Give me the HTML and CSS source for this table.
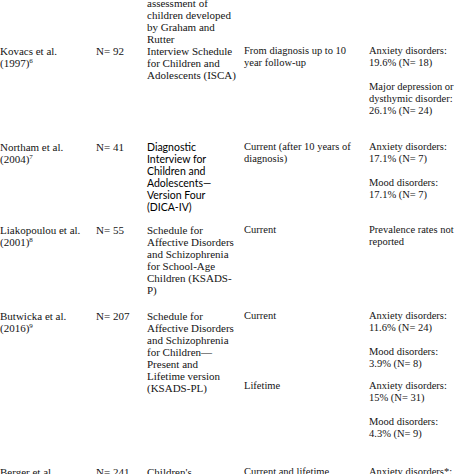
FILE: index.html
```html
<!DOCTYPE html>
<html lang="en">
<head>
<meta charset="utf-8">
<title>Studies table</title>
<link rel="stylesheet" href="styles.css">
</head>
<body>
<table class="studies">
  <colgroup>
    <col class="c-study">
    <col class="c-n">
    <col class="c-tool">
    <col class="c-time">
    <col class="c-rate">
  </colgroup>
  <tbody>
    <tr class="r0">
      <td></td>
      <td></td>
      <td>assessment of<br>children developed<br>by Graham and<br>Rutter</td>
      <td></td>
      <td></td>
    </tr>
    <tr class="r1">
      <td>Kovacs et al.<br>(1997)<sup class="ref">6</sup></td>
      <td>N= 92</td>
      <td>Interview Schedule<br>for Children and<br>Adolescents (ISCA)</td>
      <td class="time">From diagnosis up to 10<br>year follow-up</td>
      <td class="rate">
        <p class="para">Anxiety disorders:<br>19.6% (N= 18)</p>
        <p class="para">Major depression or<br>dysthymic disorder:<br>26.1% (N= 24)</p>
      </td>
    </tr>
    <tr class="r2">
      <td>Northam et al.<br>(2004)<sup class="ref">7</sup></td>
      <td>N= 41</td>
      <td class="sans">Diagnostic<br>Interview for<br>Children and<br>Adolescents—<br>Version Four<br>(DICA-IV)</td>
      <td class="time">Current (after 10 years of<br>diagnosis)</td>
      <td class="rate">
        <p class="para">Anxiety disorders:<br>17.1% (N= 7)</p>
        <p class="para">Mood disorders:<br>17.1% (N= 7)</p>
      </td>
    </tr>
    <tr class="r3">
      <td>Liakopoulou et al.<br>(2001)<sup class="ref">8</sup></td>
      <td>N= 55</td>
      <td>Schedule for<br>Affective Disorders<br>and Schizophrenia<br>for School-Age<br>Children (KSADS-<br>P)</td>
      <td class="time">Current</td>
      <td class="rate"><p class="para">Prevalence rates not<br>reported</p></td>
    </tr>
    <tr class="r4a">
      <td rowspan="2">Butwicka et al.<br>(2016)<sup class="ref">9</sup></td>
      <td rowspan="2">N= 207</td>
      <td rowspan="2">Schedule for<br>Affective Disorders<br>and Schizophrenia<br>for Children—<br>Present and<br>Lifetime version<br>(KSADS-PL)</td>
      <td class="time">Current</td>
      <td class="rate">
        <p class="para">Anxiety disorders:<br>11.6% (N= 24)</p>
        <p class="para">Mood disorders:<br>3.9% (N= 8)</p>
      </td>
    </tr>
    <tr class="r4b">
      <td class="time">Lifetime</td>
      <td class="rate">
        <p class="para">Anxiety disorders:<br>15% (N= 31)</p>
        <p class="para">Mood disorders:<br>4.3% (N= 9)</p>
      </td>
    </tr>
    <tr class="r5">
      <td>Berger et al</td>
      <td>N= 241</td>
      <td>Children's</td>
      <td class="time">Current and lifetime</td>
      <td class="rate"><p class="para">Anxiety disorders*:</p></td>
    </tr>
  </tbody>
</table>
</body>
</html>
```
FILE: styles.css
```css
html, body {
  margin: 0;
  padding: 0;
  background: #ffffff;
}
body {
  width: 474px;
  height: 474px;
  overflow: hidden;
  font-family: "Liberation Serif", "Times New Roman", serif;
  font-size: 11px;
  line-height: 12px;
  color: #141414;
}
.studies {
  table-layout: fixed;
  border-collapse: collapse;
  width: 474px;
  margin-top: -3px;
}
.c-study { width: 96px; }
.c-n { width: 51px; }
.c-tool { width: 97px; }
.c-time { width: 125px; }
.c-rate { width: 105px; }
.studies td {
  padding: 0;
  vertical-align: top;
  white-space: nowrap;
}
.r0 { height: 48px; }
.r1 { height: 96px; }
.r2 { height: 83px; }
.r3 { height: 86px; }
.r4a { height: 70px; }
.r4b { height: 86px; }
.time {
  font-size: 10.5px;
}
.rate {
  font-size: 10.5px;
}
.para {
  margin: 0 0 12px 0;
}
.para:last-child {
  margin-bottom: 0;
}
.ref {
  font-size: 7px;
  line-height: 0;
  vertical-align: 4px;
}
.sans {
  font-family: Lato, "Open Sans", sans-serif;
  font-size: 10.5px;
  line-height: 12px;
  color: #000000;
}
```
